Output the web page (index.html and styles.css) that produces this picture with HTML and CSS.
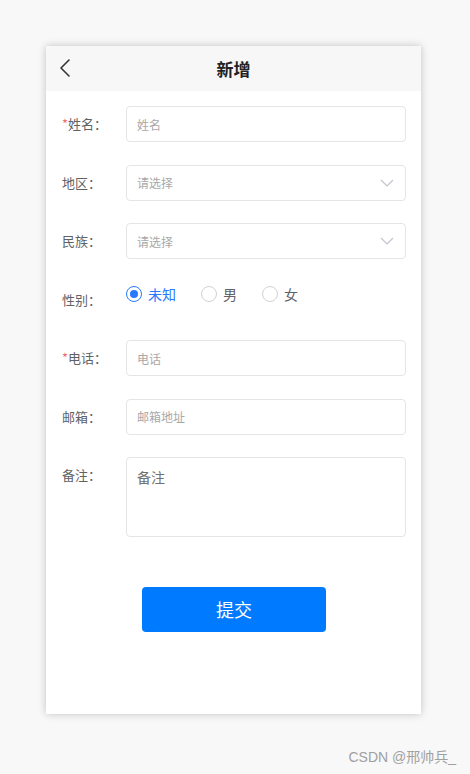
FILE: index.html
```html
<!DOCTYPE html>
<html lang="zh-CN">
<head>
<meta charset="utf-8">
<title>新增</title>
<link rel="stylesheet" href="styles.css">
</head>
<body>
<div class="phone">
  <header class="navbar">
    <span class="nav-back">
      <svg width="14" height="20" viewBox="0 0 14 20"><path d="M11 2 L3 10 L11 18" fill="none" stroke="#333" stroke-width="1.6" stroke-linecap="round" stroke-linejoin="round"/></svg>
    </span>
    <h1 class="nav-title">新增</h1>
  </header>

  <form class="form">
    <div class="form-item">
      <label class="form-label"><span class="req">*</span>姓名：</label>
      <div class="field"><span class="ph">姓名</span></div>
    </div>
    <div class="form-item">
      <label class="form-label">地区：</label>
      <div class="field select"><span class="ph">请选择</span>
        <svg class="arrow" width="14" height="8" viewBox="0 0 14 8"><path d="M1 1 L7 7 L13 1" fill="none" stroke="#c0c4cc" stroke-width="1.2"/></svg>
      </div>
    </div>
    <div class="form-item">
      <label class="form-label">民族：</label>
      <div class="field select"><span class="ph">请选择</span>
        <svg class="arrow" width="14" height="8" viewBox="0 0 14 8"><path d="M1 1 L7 7 L13 1" fill="none" stroke="#c0c4cc" stroke-width="1.2"/></svg>
      </div>
    </div>
    <div class="form-item">
      <label class="form-label">性别：</label>
      <div class="radio-group">
        <span class="radio checked"><i class="dot"></i>未知</span>
        <span class="radio"><i class="dot"></i>男</span>
        <span class="radio"><i class="dot"></i>女</span>
      </div>
    </div>
    <div class="form-item">
      <label class="form-label"><span class="req">*</span>电话：</label>
      <div class="field"><span class="ph">电话</span></div>
    </div>
    <div class="form-item">
      <label class="form-label">邮箱：</label>
      <div class="field"><span class="ph">邮箱地址</span></div>
    </div>
    <div class="form-item">
      <label class="form-label">备注：</label>
      <div class="field textarea"><span class="ph-area">备注</span></div>
    </div>
    <button type="button" class="submit">提交</button>
  </form>
</div>
<footer class="mark">CSDN @邢帅兵_</footer>
</body>
</html>
```

FILE: styles.css
```css
html, body {
  margin: 0;
  padding: 0;
}
body {
  background: #f8f8f8;
  font-family: "Noto Sans CJK SC", "Noto Sans", sans-serif;
  width: 470px;
  height: 774px;
  overflow: hidden;
}
.phone {
  margin: 46px 0 0 46px;
  width: 375px;
  height: 668px;
  background: #fff;
  box-shadow: 0 0 8px rgba(0, 0, 0, 0.22);
}
.navbar {
  position: relative;
  height: 45px;
  background: #f7f7f7;
  display: flex;
  align-items: center;
  justify-content: center;
}
.nav-back {
  position: absolute;
  left: 12px;
  top: 12px;
  display: flex;
}
.nav-title {
  margin: 0;
  font-size: 17px;
  font-weight: bold;
  color: #222;
}
.form {
  padding: 15px 15px 0 16px;
  display: flex;
  flex-direction: column;
}
.form-item {
  display: flex;
  align-items: flex-start;
  margin-bottom: 22.5px;
}
.form-label {
  width: 64px;
  flex: none;
  line-height: 36px;
  font-size: 13px;
  color: #606266;
}
.req {
  color: #f56c6c;
}
.field {
  flex: 1;
  height: 36px;
  box-sizing: border-box;
  border: 1px solid #e5e5e5;
  border-radius: 4px;
  padding: 0 10px;
  display: flex;
  align-items: center;
}
.ph {
  font-size: 12px;
  color: #a8a8a8;
}
.select {
  justify-content: space-between;
}
.arrow {
  margin-right: 1px;
}
.textarea {
  height: 80px;
  align-items: flex-start;
  padding: 8px 10px;
}
.ph-area {
  font-size: 14px;
  color: #707070;
  line-height: 22px;
}
.radio-group {
  display: flex;
  height: 24px;
  align-items: center;
}
.radio {
  display: flex;
  align-items: center;
  font-size: 14px;
  color: #606266;
  margin-right: 25px;
}
.radio .dot {
  width: 16px;
  height: 16px;
  box-sizing: border-box;
  border: 1px solid #d1d1d1;
  border-radius: 50%;
  margin-right: 6px;
  position: relative;
}
.radio.checked {
  color: #2979ff;
}
.radio.checked .dot {
  border-color: #2979ff;
}
.radio.checked .dot::after {
  content: "";
  position: absolute;
  left: 3px;
  top: 3px;
  width: 8px;
  height: 8px;
  border-radius: 50%;
  background: #2979ff;
}
.submit {
  margin: 27px auto 0;
  width: 184px;
  height: 45px;
  border: none;
  border-radius: 4px;
  background: #007aff;
  color: #fff;
  font-family: inherit;
  font-size: 18px;
}
.mark {
  text-align: right;
  padding-right: 14px;
  margin-top: 32px;
  font-family: "Liberation Sans", "Noto Sans CJK SC", sans-serif;
  font-size: 14px;
  color: #a0a0a0;
}
```
